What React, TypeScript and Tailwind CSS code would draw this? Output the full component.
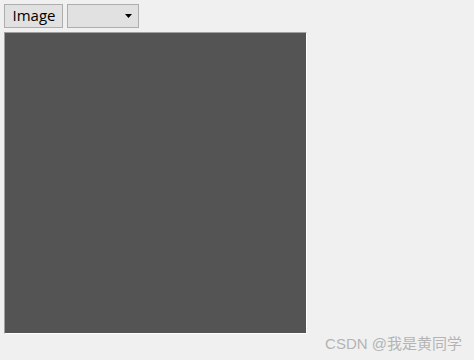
export default function App() {
  return (
    <div className="relative w-[474px] h-[360px] bg-[#f0f0f0] overflow-hidden" style={{ fontFamily: '"Segoe UI", "Open Sans", "Noto Sans", sans-serif' }}>
      <div className="flex flex-col pl-[4px] pt-[4px] gap-[4px]">
        <div className="flex gap-[4px]">
          <button className="w-[59px] h-[24px] bg-[#e1e1e1] border border-[#adadad] text-[15px] leading-none text-black flex items-center justify-center pb-[1px] pl-[1px]">
            Image
          </button>
          <div className="w-[72px] h-[24px] bg-[#e1e1e1] border border-[#adadad] flex items-center justify-end pr-[6px]">
            <svg width="7" height="4" viewBox="0 0 7 4"><path d="M0 0H7L3.5 4Z" fill="#000" /></svg>
          </div>
        </div>
        <div className="w-[303px] h-[302px] bg-[#545454] border-t border-l border-[#a0a0a0] border-r-[#ffffff] border-b-[#ffffff] border-r border-b" />
      </div>
      <div className="absolute right-[12px] bottom-[9px] text-[15px] leading-none text-[#b4b4b4]" style={{ fontFamily: '"Liberation Sans", "Noto Sans CJK SC", sans-serif' }}>
        CSDN @我是黄同学
      </div>
    </div>
  );
}
